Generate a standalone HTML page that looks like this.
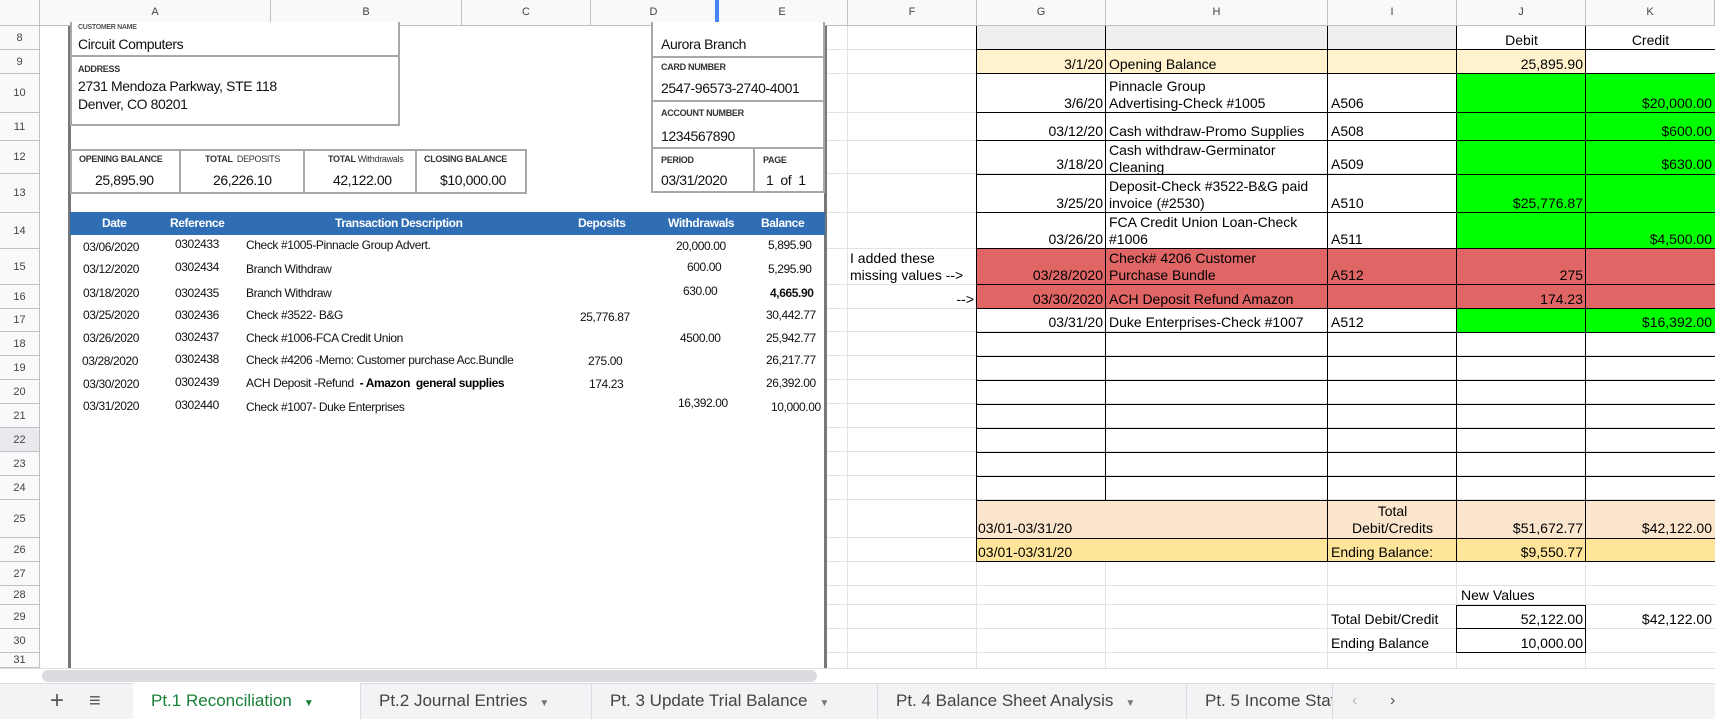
<!DOCTYPE html>
<html><head><meta charset="utf-8"><style>
*{margin:0;padding:0;box-sizing:border-box}
body{width:1715px;height:719px;overflow:hidden;background:#fff;font-family:"Liberation Sans",Arial,sans-serif;position:relative}
.a{position:absolute}
.ch{position:absolute;top:0;height:26px;background:#f8f9fa;border-right:1px solid #c0c0c0;border-bottom:1px solid #c0c0c0;font-size:11px;color:#444;text-align:center;line-height:25px}
.rh{position:absolute;left:0;width:40px;background:#f8f9fa;border-right:1px solid #c0c0c0;border-bottom:1px solid #c0c0c0;font-size:11px;color:#444;text-align:center;display:flex;align-items:center;justify-content:center}
.hl{position:absolute;height:1px;background:#e2e2e2}
.vl{position:absolute;width:1px;background:#e2e2e2}
.c{position:absolute;font-size:14px;color:#000;padding:0 3px 1px;display:flex;align-items:flex-end;line-height:17px;white-space:nowrap;overflow:hidden}
.r{justify-content:flex-end}
.s{position:absolute;font-size:12px;color:#111;white-space:nowrap;transform-origin:left center;letter-spacing:-0.4px}
.box{position:absolute;border:2px solid #a8a8a8;background:#fff}
.lab{position:absolute;font-size:9px;font-weight:bold;color:#333;letter-spacing:-0.3px;white-space:nowrap}
.bh{position:absolute;font-size:12px;font-weight:bold;color:#fff;white-space:nowrap;letter-spacing:-0.4px}
.tab{position:absolute;top:683px;height:36px;font-size:17px;color:#444;line-height:36px;padding-left:18px;white-space:nowrap;border-right:1px solid #dadce0}
.dd{font-size:10px;color:#777;margin-left:12px}
</style></head><body>
<div class="ch" style="left:0;width:40px"></div>
<div class="ch" style="left:40px;width:231px">A</div>
<div class="ch" style="left:271px;width:191px">B</div>
<div class="ch" style="left:462px;width:129px">C</div>
<div class="ch" style="left:591px;width:126px">D</div>
<div class="ch" style="left:717px;width:131px">E</div>
<div class="ch" style="left:848px;width:129px">F</div>
<div class="ch" style="left:977px;width:129px">G</div>
<div class="ch" style="left:1106px;width:222px">H</div>
<div class="ch" style="left:1328px;width:129px">I</div>
<div class="ch" style="left:1457px;width:129px">J</div>
<div class="ch" style="left:1586px;width:129px">K</div>
<div class="a" style="left:715px;top:0;width:4px;height:26px;background:#4285f4"></div>
<div class="rh" style="top:26px;height:24px">8</div>
<div class="rh" style="top:50px;height:24px">9</div>
<div class="rh" style="top:74px;height:39px">10</div>
<div class="rh" style="top:113px;height:28px">11</div>
<div class="rh" style="top:141px;height:33px">12</div>
<div class="rh" style="top:174px;height:39px">13</div>
<div class="rh" style="top:213px;height:36px">14</div>
<div class="rh" style="top:249px;height:36px">15</div>
<div class="rh" style="top:285px;height:24px">16</div>
<div class="rh" style="top:309px;height:23px">17</div>
<div class="rh" style="top:332px;height:24px">18</div>
<div class="rh" style="top:356px;height:24px">19</div>
<div class="rh" style="top:380px;height:24px">20</div>
<div class="rh" style="top:404px;height:24px">21</div>
<div class="rh" style="top:428px;height:24px;background:#e8eaed">22</div>
<div class="rh" style="top:452px;height:24px">23</div>
<div class="rh" style="top:476px;height:24px">24</div>
<div class="rh" style="top:500px;height:38px">25</div>
<div class="rh" style="top:538px;height:24px">26</div>
<div class="rh" style="top:562px;height:24px">27</div>
<div class="rh" style="top:586px;height:19px">28</div>
<div class="rh" style="top:605px;height:24px">29</div>
<div class="rh" style="top:629px;height:24px">30</div>
<div class="rh" style="top:653px;height:15px">31</div>

<div class="hl" style="left:826px;width:889px;top:49px"></div>
<div class="hl" style="left:826px;width:889px;top:73px"></div>
<div class="hl" style="left:826px;width:889px;top:112px"></div>
<div class="hl" style="left:826px;width:889px;top:140px"></div>
<div class="hl" style="left:826px;width:889px;top:173px"></div>
<div class="hl" style="left:826px;width:889px;top:212px"></div>
<div class="hl" style="left:826px;width:889px;top:248px"></div>
<div class="hl" style="left:826px;width:889px;top:284px"></div>
<div class="hl" style="left:826px;width:889px;top:308px"></div>
<div class="hl" style="left:826px;width:889px;top:331px"></div>
<div class="hl" style="left:826px;width:889px;top:355px"></div>
<div class="hl" style="left:826px;width:889px;top:379px"></div>
<div class="hl" style="left:826px;width:889px;top:403px"></div>
<div class="hl" style="left:826px;width:889px;top:427px"></div>
<div class="hl" style="left:826px;width:889px;top:451px"></div>
<div class="hl" style="left:826px;width:889px;top:475px"></div>
<div class="hl" style="left:826px;width:889px;top:499px"></div>
<div class="hl" style="left:826px;width:889px;top:537px"></div>
<div class="hl" style="left:826px;width:889px;top:561px"></div>
<div class="hl" style="left:826px;width:889px;top:585px"></div>
<div class="hl" style="left:826px;width:889px;top:604px"></div>
<div class="hl" style="left:826px;width:889px;top:628px"></div>
<div class="hl" style="left:826px;width:889px;top:652px"></div>
<div class="vl" style="left:847px;top:26px;height:642px"></div>
<div class="vl" style="left:976px;top:26px;height:642px"></div>
<div class="vl" style="left:1105px;top:26px;height:642px"></div>
<div class="vl" style="left:1327px;top:26px;height:642px"></div>
<div class="vl" style="left:1456px;top:26px;height:642px"></div>
<div class="vl" style="left:1585px;top:26px;height:642px"></div>

<div class="a" style="left:977px;top:26px;width:480px;height:24px;background:#efefef"></div>
<div class="a" style="left:977px;top:50px;width:609px;height:24px;background:#fff2cc"></div>
<div class="a" style="left:1457px;top:74px;width:258px;height:175px;background:#00ff00"></div>
<div class="a" style="left:977px;top:249px;width:738px;height:60px;background:#e06666"></div>
<div class="a" style="left:1457px;top:309px;width:258px;height:23px;background:#00ff00"></div>
<div class="a" style="left:977px;top:500px;width:738px;height:38px;background:#fce5cd"></div>
<div class="a" style="left:977px;top:538px;width:738px;height:24px;background:#ffe599"></div>
<div class="a" style="left:976px;top:26px;width:1px;height:536px;background:#000"></div>
<div class="a" style="left:1105px;top:26px;width:1px;height:474px;background:#000"></div>
<div class="a" style="left:1327px;top:26px;width:1px;height:536px;background:#000"></div>
<div class="a" style="left:1456px;top:26px;width:1px;height:536px;background:#000"></div>
<div class="a" style="left:1585px;top:26px;width:1px;height:536px;background:#000"></div>
<div class="a" style="left:977px;top:49px;width:738px;height:1px;background:#000"></div>
<div class="a" style="left:977px;top:73px;width:738px;height:1px;background:#000"></div>
<div class="a" style="left:977px;top:112px;width:738px;height:1px;background:#000"></div>
<div class="a" style="left:977px;top:140px;width:738px;height:1px;background:#000"></div>
<div class="a" style="left:977px;top:174px;width:738px;height:1px;background:#000"></div>
<div class="a" style="left:977px;top:212px;width:738px;height:1px;background:#000"></div>
<div class="a" style="left:977px;top:248px;width:738px;height:1px;background:#000"></div>
<div class="a" style="left:977px;top:284px;width:738px;height:1px;background:#000"></div>
<div class="a" style="left:977px;top:308px;width:738px;height:1px;background:#000"></div>
<div class="a" style="left:977px;top:332px;width:738px;height:1px;background:#000"></div>
<div class="a" style="left:977px;top:356px;width:738px;height:1px;background:#000"></div>
<div class="a" style="left:977px;top:380px;width:738px;height:1px;background:#000"></div>
<div class="a" style="left:977px;top:404px;width:738px;height:1px;background:#000"></div>
<div class="a" style="left:977px;top:428px;width:738px;height:1px;background:#000"></div>
<div class="a" style="left:977px;top:452px;width:738px;height:1px;background:#000"></div>
<div class="a" style="left:977px;top:476px;width:738px;height:1px;background:#000"></div>
<div class="a" style="left:977px;top:500px;width:738px;height:1px;background:#000"></div>
<div class="a" style="left:977px;top:538px;width:738px;height:1px;background:#000"></div>
<div class="a" style="left:977px;top:561px;width:738px;height:1px;background:#000"></div>
<div class="a" style="left:1457px;top:605px;width:129px;height:1px;background:#000"></div>
<div class="a" style="left:1456px;top:605px;width:1px;height:48px;background:#000"></div>
<div class="a" style="left:1585px;top:605px;width:1px;height:48px;background:#000"></div>
<div class="a" style="left:1457px;top:628px;width:129px;height:1px;background:#000"></div>
<div class="a" style="left:1457px;top:652px;width:129px;height:1px;background:#000"></div>

<div class="c r" style="left:1457px;top:26px;width:129px;height:24px;justify-content:center">Debit</div>
<div class="c r" style="left:1586px;top:26px;width:129px;height:24px;justify-content:center">Credit</div>
<div class="c r" style="left:977px;top:50px;width:129px;height:24px">3/1/20</div>
<div class="c" style="left:1106px;top:50px;width:222px;height:24px">Opening Balance</div>
<div class="c r" style="left:1457px;top:50px;width:129px;height:24px">25,895.90</div>
<div class="c r" style="left:977px;top:74px;width:129px;height:39px">3/6/20</div>
<div class="c" style="left:1106px;top:74px;width:222px;height:39px">Pinnacle Group<br>Advertising-Check #1005</div>
<div class="c" style="left:1328px;top:74px;width:129px;height:39px">A506</div>
<div class="c r" style="left:1586px;top:74px;width:129px;height:39px">$20,000.00</div>
<div class="c r" style="left:977px;top:113px;width:129px;height:28px">03/12/20</div>
<div class="c" style="left:1106px;top:113px;width:222px;height:28px">Cash withdraw-Promo Supplies</div>
<div class="c" style="left:1328px;top:113px;width:129px;height:28px">A508</div>
<div class="c r" style="left:1586px;top:113px;width:129px;height:28px">$600.00</div>
<div class="c r" style="left:977px;top:141px;width:129px;height:33px">3/18/20</div>
<div class="c" style="left:1106px;top:141px;width:222px;height:33px;align-items:flex-start;padding-top:1px">Cash withdraw-Germinator<br>Cleaning</div>
<div class="c" style="left:1328px;top:141px;width:129px;height:33px">A509</div>
<div class="c r" style="left:1586px;top:141px;width:129px;height:33px">$630.00</div>
<div class="c r" style="left:977px;top:174px;width:129px;height:39px">3/25/20</div>
<div class="c" style="left:1106px;top:174px;width:222px;height:39px">Deposit-Check #3522-B&amp;G paid<br>invoice (#2530)</div>
<div class="c" style="left:1328px;top:174px;width:129px;height:39px">A510</div>
<div class="c r" style="left:1457px;top:174px;width:129px;height:39px">$25,776.87</div>
<div class="c r" style="left:977px;top:213px;width:129px;height:36px">03/26/20</div>
<div class="c" style="left:1106px;top:213px;width:222px;height:36px">FCA Credit Union Loan-Check<br>#1006</div>
<div class="c" style="left:1328px;top:213px;width:129px;height:36px">A511</div>
<div class="c r" style="left:1586px;top:213px;width:129px;height:36px">$4,500.00</div>
<div class="c" style="left:848px;top:249px;width:129px;height:36px;padding-left:2px">I added these<br>missing values --&gt;</div>
<div class="c r" style="left:977px;top:249px;width:129px;height:36px">03/28/2020</div>
<div class="c" style="left:1106px;top:249px;width:222px;height:36px">Check# 4206 Customer<br>Purchase Bundle</div>
<div class="c" style="left:1328px;top:249px;width:129px;height:36px">A512</div>
<div class="c r" style="left:1457px;top:249px;width:129px;height:36px">275</div>
<div class="c r" style="left:848px;top:285px;width:129px;height:24px">--&gt;</div>
<div class="c r" style="left:977px;top:285px;width:129px;height:24px">03/30/2020</div>
<div class="c" style="left:1106px;top:285px;width:222px;height:24px">ACH Deposit Refund Amazon</div>
<div class="c r" style="left:1457px;top:285px;width:129px;height:24px">174.23</div>
<div class="c r" style="left:977px;top:309px;width:129px;height:23px">03/31/20</div>
<div class="c" style="left:1106px;top:309px;width:222px;height:23px">Duke Enterprises-Check #1007</div>
<div class="c" style="left:1328px;top:309px;width:129px;height:23px">A512</div>
<div class="c r" style="left:1586px;top:309px;width:129px;height:23px">$16,392.00</div>
<div class="c" style="left:977px;top:500px;width:200px;height:38px;padding-left:1px">03/01-03/31/20</div>
<div class="c" style="left:1328px;top:500px;width:129px;height:38px;text-align:center;justify-content:center">Total<br>Debit/Credits</div>
<div class="c r" style="left:1457px;top:500px;width:129px;height:38px">$51,672.77</div>
<div class="c r" style="left:1586px;top:500px;width:129px;height:38px">$42,122.00</div>
<div class="c" style="left:977px;top:538px;width:200px;height:24px;padding-left:1px">03/01-03/31/20</div>
<div class="c" style="left:1328px;top:538px;width:129px;height:24px">Ending Balance:</div>
<div class="c r" style="left:1457px;top:538px;width:129px;height:24px">$9,550.77</div>
<div class="c" style="left:1457px;top:586px;width:129px;height:19px;padding-left:4px">New Values</div>
<div class="c" style="left:1328px;top:605px;width:129px;height:24px">Total Debit/Credit</div>
<div class="c r" style="left:1457px;top:605px;width:129px;height:24px">52,122.00</div>
<div class="c r" style="left:1586px;top:605px;width:129px;height:24px">$42,122.00</div>
<div class="c" style="left:1328px;top:629px;width:129px;height:24px">Ending Balance</div>
<div class="c r" style="left:1457px;top:629px;width:129px;height:24px">10,000.00</div>

<div class="a" style="left:40px;top:26px;width:786px;height:642px;background:#fff"></div>
<div class="a" style="left:68px;top:26px;width:3px;height:642px;background:#777"></div>
<div class="a" style="left:824px;top:26px;width:3px;height:642px;background:#777"></div>
<div class="box" style="left:70px;top:22px;width:330px;height:35px;border-top:none"></div>
<div class="lab" style="left:78px;top:24px;font-size:7px;color:#555">CUSTOMER NAME</div>
<div class="s" style="left:78px;top:36px;font-size:14px">Circuit Computers</div>
<div class="box" style="left:70px;top:55px;width:330px;height:71px"></div>
<div class="lab" style="left:78px;top:64px">ADDRESS</div>
<div class="s" style="left:78px;top:78px;font-size:14px">2731 Mendoza Parkway, STE 118</div>
<div class="s" style="left:78px;top:96px;font-size:14px">Denver, CO 80201</div>
<div class="box" style="left:651px;top:22px;width:174px;height:36px;border-top:none"></div>
<div class="s" style="left:661px;top:36px;font-size:14px">Aurora Branch</div>
<div class="box" style="left:651px;top:56px;width:174px;height:46px"></div>
<div class="lab" style="left:661px;top:62px">CARD NUMBER</div>
<div class="s" style="left:661px;top:80px;font-size:14px">2547-96573-2740-4001</div>
<div class="box" style="left:651px;top:100px;width:174px;height:49px"></div>
<div class="lab" style="left:661px;top:108px">ACCOUNT NUMBER</div>
<div class="s" style="left:661px;top:128px;font-size:14px">1234567890</div>
<div class="box" style="left:651px;top:147px;width:104px;height:46px"></div>
<div class="box" style="left:753px;top:147px;width:72px;height:46px"></div>
<div class="lab" style="left:661px;top:155px">PERIOD</div>
<div class="lab" style="left:763px;top:155px">PAGE</div>
<div class="s" style="left:661px;top:172px;font-size:14px">03/31/2020</div>
<div class="s" style="left:766px;top:172px;font-size:14px">1 &nbsp;of &nbsp;1</div>
<div class="box" style="left:70px;top:149px;width:111px;height:45px"></div>
<div class="box" style="left:179px;top:149px;width:126px;height:45px"></div>
<div class="box" style="left:303px;top:149px;width:114px;height:45px"></div>
<div class="box" style="left:415px;top:149px;width:112px;height:45px"></div>
<div class="lab" style="left:79px;top:154px">OPENING BALANCE</div>
<div class="lab" style="left:205px;top:154px">TOTAL &nbsp;<span style="font-weight:normal">DEPOSITS</span></div>
<div class="lab" style="left:328px;top:154px">TOTAL <span style="font-weight:normal">Withdrawals</span></div>
<div class="lab" style="left:424px;top:154px">CLOSING BALANCE</div>
<div class="s" style="left:95px;top:172px;font-size:14px">25,895.90</div>
<div class="s" style="left:213px;top:172px;font-size:14px">26,226.10</div>
<div class="s" style="left:333px;top:172px;font-size:14px">42,122.00</div>
<div class="s" style="left:440px;top:172px;font-size:14px">$10,000.00</div>
<div class="a" style="left:70px;top:212px;width:755px;height:23px;background:#2f6db5"></div>
<div class="bh" style="left:102px;top:216px">Date</div>
<div class="bh" style="left:170px;top:216px">Reference</div>
<div class="bh" style="left:335px;top:216px">Transaction Description</div>
<div class="bh" style="left:578px;top:216px">Deposits</div>
<div class="bh" style="left:668px;top:216px">Withdrawals</div>
<div class="bh" style="left:761px;top:216px">Balance</div>

<div class="s" style="left:83px;top:240px">03/06/2020</div><div class="s" style="left:175px;top:237px">0302433</div><div class="s" style="left:246px;top:238px">Check #1005-Pinnacle Group Advert.</div><div class="s" style="left:676px;top:239px">20,000.00</div><div class="s" style="left:768px;top:238px">5,895.90</div>
<div class="s" style="left:83px;top:262px">03/12/2020</div><div class="s" style="left:175px;top:260px">0302434</div><div class="s" style="left:246px;top:262px">Branch Withdraw</div><div class="s" style="left:687px;top:260px">600.00</div><div class="s" style="left:768px;top:262px">5,295.90</div>
<div class="s" style="left:83px;top:286px">03/18/2020</div><div class="s" style="left:175px;top:286px">0302435</div><div class="s" style="left:246px;top:286px">Branch Withdraw</div><div class="s" style="left:683px;top:284px">630.00</div><div class="s" style="left:770px;top:286px;font-weight:bold">4,665.90</div>
<div class="s" style="left:83px;top:308px">03/25/2020</div><div class="s" style="left:175px;top:308px">0302436</div><div class="s" style="left:246px;top:308px">Check #3522- B&amp;G</div><div class="s" style="left:580px;top:310px">25,776.87</div><div class="s" style="left:766px;top:308px">30,442.77</div>
<div class="s" style="left:83px;top:331px">03/26/2020</div><div class="s" style="left:175px;top:330px">0302437</div><div class="s" style="left:246px;top:331px">Check #1006-FCA Credit Union</div><div class="s" style="left:680px;top:331px">4500.00</div><div class="s" style="left:766px;top:331px">25,942.77</div>
<div class="s" style="left:82px;top:354px">03/28/2020</div><div class="s" style="left:175px;top:352px">0302438</div><div class="s" style="left:246px;top:353px">Check #4206 -Memo: Customer purchase Acc.Bundle</div><div class="s" style="left:588px;top:354px">275.00</div><div class="s" style="left:766px;top:353px">26,217.77</div>
<div class="s" style="left:83px;top:377px">03/30/2020</div><div class="s" style="left:175px;top:375px">0302439</div><div class="s" style="left:246px;top:376px">ACH Deposit -Refund &nbsp;<b style="color:#000">- Amazon &nbsp;general supplies</b></div><div class="s" style="left:589px;top:377px">174.23</div><div class="s" style="left:766px;top:376px">26,392.00</div>
<div class="s" style="left:83px;top:399px">03/31/2020</div><div class="s" style="left:175px;top:398px">0302440</div><div class="s" style="left:246px;top:400px">Check #1007- Duke Enterprises</div><div class="s" style="left:678px;top:396px">16,392.00</div><div class="s" style="left:771px;top:400px">10,000.00</div>

<div class="a" style="left:0;top:668px;width:1715px;height:15px;background:#fff;border-top:1px solid #e0e0e0"></div>
<div class="a" style="left:42px;top:670px;width:775px;height:12px;background:#dadce0;border-radius:6px"></div>
<div class="a" style="left:0;top:683px;width:1715px;height:36px;background:#f1f3f4;border-top:1px solid #dadce0"></div>
<div class="a" style="left:50px;top:683px;font-size:24px;color:#555;line-height:36px">+</div>
<div class="a" style="left:89px;top:683px;font-size:20px;color:#555;line-height:36px">&#8801;</div>
<div class="tab" style="left:133px;width:228px;background:#fff;color:#188038">Pt.1 Reconciliation<span class="dd" style="color:#188038">&#9660;</span></div>
<div class="tab" style="left:361px;width:231px">Pt.2 Journal Entries<span class="dd">&#9660;</span></div>
<div class="tab" style="left:592px;width:286px">Pt. 3 Update Trial Balance<span class="dd">&#9660;</span></div>
<div class="tab" style="left:878px;width:309px">Pt. 4 Balance Sheet Analysis<span class="dd">&#9660;</span></div>
<div class="tab" style="left:1187px;width:146px;overflow:hidden">Pt. 5 Income Statement</div>
<div class="a" style="left:1352px;top:683px;font-size:16px;color:#bbb;line-height:36px">&#8249;</div>
<div class="a" style="left:1390px;top:683px;font-size:16px;color:#555;line-height:36px">&#8250;</div>
</body></html>
